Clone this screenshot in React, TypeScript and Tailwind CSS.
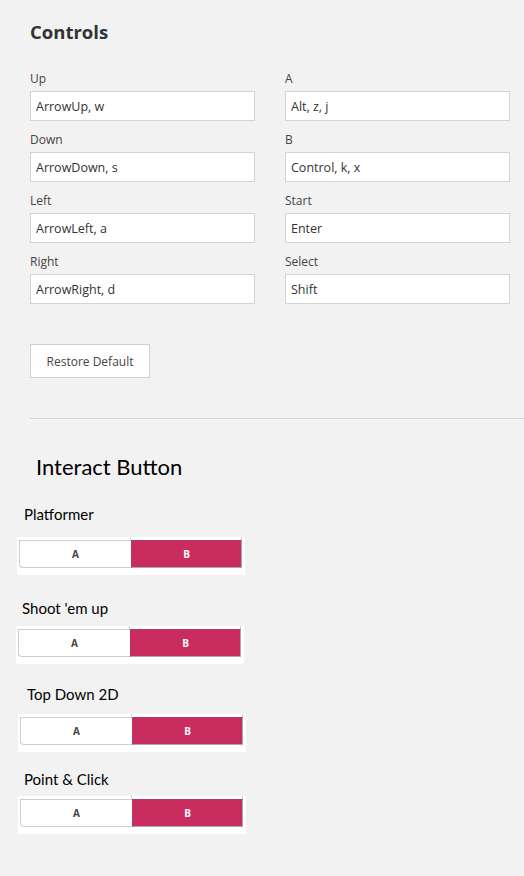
import React from 'react';

const controls = [
  { left: { label: 'Up', value: 'ArrowUp, w' }, right: { label: 'A', value: 'Alt, z, j' } },
  { left: { label: 'Down', value: 'ArrowDown, s' }, right: { label: 'B', value: 'Control, k, x' } },
  { left: { label: 'Left', value: 'ArrowLeft, a' }, right: { label: 'Start', value: 'Enter' } },
  { left: { label: 'Right', value: 'ArrowRight, d' }, right: { label: 'Select', value: 'Shift' } },
];

// small offsets differ per row in the original, kept as-is
const genres = [
  { name: 'Platformer', labelClass: 'ml-[24px] mt-[21px]', boxClass: 'ml-[17px] mt-[13px]' },
  { name: "Shoot 'em up", labelClass: 'ml-[22px] mt-[23px]', boxClass: 'ml-[16px] mt-[8px]' },
  { name: 'Top Down 2D', labelClass: 'ml-[27px] mt-[20px]', boxClass: 'ml-[18px] mt-[10px]' },
  { name: 'Point & Click', labelClass: 'ml-[24px] mt-[17px]', boxClass: 'ml-[18px] mt-[7px]' },
];

const Field = ({ label, value }: { label: string; value: string }) => (
  <div className="flex flex-col">
    <label className="h-[17px] text-[12px] leading-[17px] text-[#444]">{label}</label>
    <input
      readOnly
      value={value}
      className="mt-[4px] h-[30px] w-[225px] border border-[#d4d4d4] bg-white px-[5px] text-[12.5px] text-[#333] outline-none"
    />
  </div>
);

const Toggle = () => (
  <div className="w-[228px] bg-white pt-[3px] pb-[7px] pl-[2px] pr-[3px]">
    <div className="relative flex h-[28px] font-['Open_Sans',sans-serif] text-[10px] font-bold">
      <span className="absolute left-[111px] top-[-3px] h-[3px] w-px bg-[#d0d0d0]" />
      <span className="absolute left-[222px] top-[-3px] h-[3px] w-px bg-[#d0d0d0]" />
      <div className="flex w-[112px] items-center justify-center rounded-bl-[4px] border border-r-0 border-[#cfcfcf] text-[#444]">
        A
      </div>
      <div className="flex w-[111px] items-center justify-center border border-[#b7375c] border-r-[#aaa] border-b-[#a9a9a9] bg-[#c92c5e] text-white">
        B
      </div>
    </div>
  </div>
);

export default function App() {
  return (
    <div className="h-[876px] w-[524px] overflow-hidden bg-[#f2f2f2] font-['Open_Sans',sans-serif]">
      <div className="pl-[30px] pt-[18px]">
        <h2 className="h-[28px] text-[18.5px] font-bold leading-[28px] text-[#333]">Controls</h2>
        <div className="mt-[24px] flex flex-col gap-[10px]">
          {controls.map((row) => (
            <div key={row.left.label} className="flex gap-[30px]">
              <Field {...row.left} />
              <Field {...row.right} />
            </div>
          ))}
        </div>
        <button className="mt-[40px] h-[34px] w-[120px] border border-[#d0d0d0] bg-white pt-[2px] text-[12px] text-[#444]">
          Restore Default
        </button>
        <div className="mt-[40px] h-px bg-[#d6d6d6]" />
      </div>
      <div className="font-['Lato',sans-serif] text-black">
        <h2 className="ml-[36px] mt-[32px] text-[22px] leading-[32px]">Interact Button</h2>
        {genres.map((g) => (
          <div key={g.name}>
            <div className={`${g.labelClass} text-[15px] leading-[20px]`}>{g.name}</div>
            <div className={g.boxClass}>
              <Toggle />
            </div>
          </div>
        ))}
      </div>
    </div>
  );
}
